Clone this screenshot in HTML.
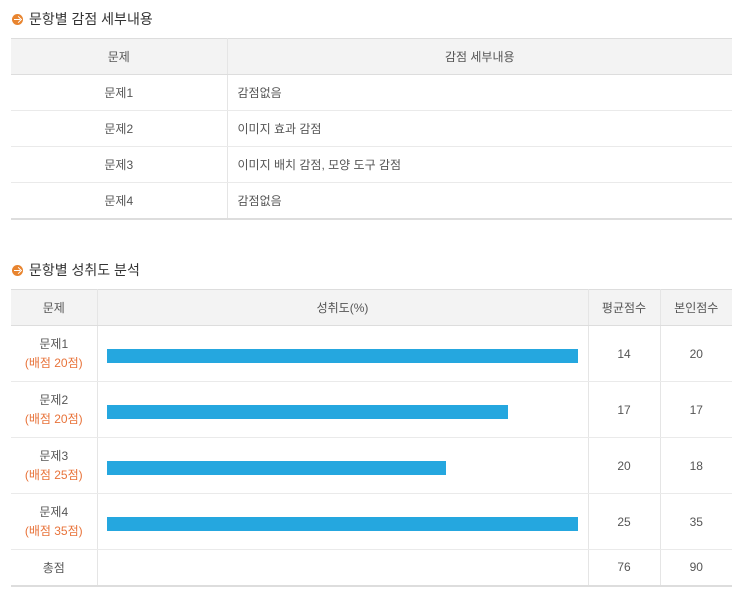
<!DOCTYPE html>
<html><head><meta charset="utf-8"><style>
*{margin:0;padding:0;box-sizing:border-box}
body{width:743px;height:598px;background:#fff;position:relative;overflow:hidden;font-family:"Liberation Sans","Noto Sans CJK KR",sans-serif;color:#555;font-size:12px}
.t{position:absolute;left:12px;font-size:14px;color:#333;display:flex;align-items:center}
.t i{width:11px;height:11px;border-radius:50%;background:#e8842f;margin-right:6px;position:relative;display:inline-block}
.t i:before{content:"";position:absolute;left:2px;top:5px;width:6px;height:1.5px;background:#fff}
.t i:after{content:"";position:absolute;left:4px;top:3px;width:4px;height:4px;border-top:1.5px solid #fff;border-right:1.5px solid #fff;transform:rotate(45deg)}
table{position:absolute;left:11px;width:721px;border-collapse:collapse;border-top:1px solid #ddd;border-bottom:2px solid #ddd}
th{background:#f3f3f3;font-weight:normal;color:#555;height:36px;border-bottom:1px solid #ddd}
td{border-bottom:1px solid #eaeaea;text-align:center}
th+th,td+td{border-left:1px solid #e5e5e5}
.o{color:#e8733a}
.bar{height:14px;background:#25a7df;margin-left:9px;position:relative;top:2px}
</style></head><body>
<div class="t" style="top:9px"><i></i>문항별 감점 세부내용</div>
<table style="top:38px">
<tr><th style="width:216px">문제</th><th>감점 세부내용</th></tr>
<tr style="height:36px"><td>문제1</td><td style="text-align:left;padding-left:10px">감점없음</td></tr>
<tr style="height:36px"><td>문제2</td><td style="text-align:left;padding-left:10px">이미지 효과 감점</td></tr>
<tr style="height:36px"><td>문제3</td><td style="text-align:left;padding-left:10px">이미지 배치 감점, 모양 도구 감점</td></tr>
<tr style="height:36px"><td style="border-bottom:0">문제4</td><td style="text-align:left;padding-left:10px;border-bottom:0">감점없음</td></tr>
</table>
<div class="t" style="top:260px"><i></i>문항별 성취도 분석</div>
<table style="top:289px">
<tr><th style="width:86px">문제</th><th style="width:491px">성취도(%)</th><th style="width:72px">평균점수</th><th>본인점수</th></tr>
<tr style="height:56px"><td style="line-height:19px">문제1<br><span class="o">(배점 20점)</span></td><td><div class="bar" style="width:471px"></div></td><td>14</td><td>20</td></tr>
<tr style="height:56px"><td style="line-height:19px">문제2<br><span class="o">(배점 20점)</span></td><td><div class="bar" style="width:401px"></div></td><td>17</td><td>17</td></tr>
<tr style="height:56px"><td style="line-height:19px">문제3<br><span class="o">(배점 25점)</span></td><td><div class="bar" style="width:339px"></div></td><td>20</td><td>18</td></tr>
<tr style="height:56px"><td style="line-height:19px">문제4<br><span class="o">(배점 35점)</span></td><td><div class="bar" style="width:471px"></div></td><td>25</td><td>35</td></tr>
<tr style="height:36px"><td style="border-bottom:0">총점</td><td style="border-bottom:0"></td><td style="border-bottom:0">76</td><td style="border-bottom:0">90</td></tr>
</table>
</body></html>
